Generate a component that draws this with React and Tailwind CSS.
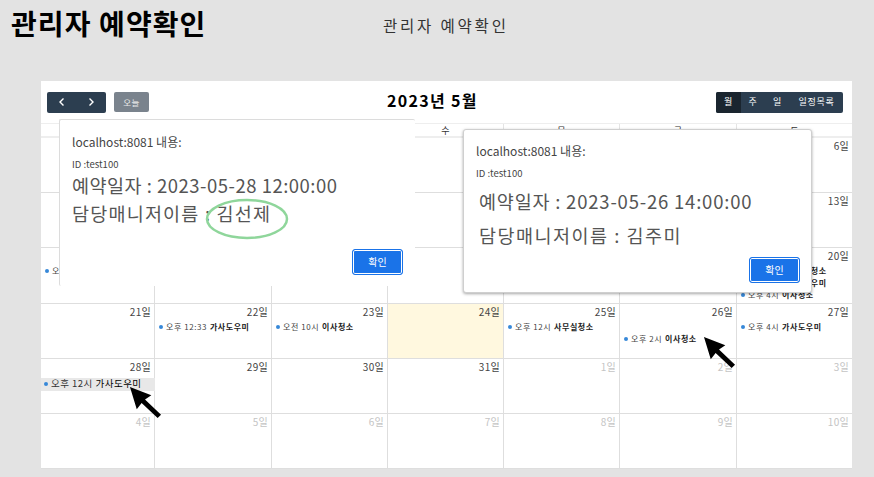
import React from 'react';

const FONT = '"Noto Sans CJK KR", "Noto Sans", sans-serif';

const WEEK_DAYS = ['일', '월', '화', '수', '목', '금', '토'];

const WEEKS = [
  [{ d: 30, off: true }, { d: 1 }, { d: 2 }, { d: 3 }, { d: 4 }, { d: 5 }, { d: 6 }],
  [{ d: 7 }, { d: 8 }, { d: 9 }, { d: 10 }, { d: 11 }, { d: 12 }, { d: 13 }],
  [
    { d: 14, events: [['오후 1시', '가사도우미']] },
    { d: 15 },
    { d: 16 },
    { d: 17 },
    { d: 18 },
    { d: 19 },
    {
      d: 20,
      events: [
        ['오후 12시', '사무실청소'],
        ['오후 12시', '가사도우미'],
        ['오후 4시', '이사청소'],
      ],
    },
  ],
  [
    { d: 21 },
    { d: 22, events: [['오후 12:33', '가사도우미']] },
    { d: 23, events: [['오전 10시', '이사청소']] },
    { d: 24, today: true },
    { d: 25, events: [['오후 12시', '사무실청소']] },
    { d: 26, events: [['오후 2시', '이사청소']], pushed: true },
    { d: 27, events: [['오후 4시', '가사도우미']] },
  ],
  [
    { d: 28, highlight: true },
    { d: 29 },
    { d: 30 },
    { d: 31 },
    { d: 1, off: true },
    { d: 2, off: true },
    { d: 3, off: true },
  ],
  [
    { d: 4, off: true },
    { d: 5, off: true },
    { d: 6, off: true },
    { d: 7, off: true },
    { d: 8, off: true },
    { d: 9, off: true },
    { d: 10, off: true },
  ],
];

function DayCell({ cell, last }) {
  return (
    <div
      className={`relative min-w-0 border-b border-[#dedede] ${last ? '' : 'border-r'} ${cell.today ? 'bg-[#fff8df]' : ''}`}
    >
      <div className={`pr-[3px] pt-[1px] text-right text-[10px] leading-[14px] tracking-[0.3px] ${cell.off ? 'text-[#c4c4c4]' : 'text-[#444]'}`}>
        {cell.d}일
      </div>
      {cell.highlight && (
        <div className="-mr-[1px] mt-[4px] flex h-[13px] items-center gap-[3px] bg-[#e8e8e8] pl-[3px] text-[9.5px] leading-none tracking-[0.45px] whitespace-nowrap">
          <span className="h-[4px] w-[4px] rounded-full bg-[#3788d8]" />
          <span className="text-[#333]">오후 12시</span>
          <span className="text-black">가사도우미</span>
        </div>
      )}
      <div className={cell.pushed ? 'pt-[14px]' : 'pt-[2px]'}>
        {cell.events?.map(([time, title], i) => (
          <div key={i} className="flex h-[12px] items-center gap-[3px] pl-[4px] text-[8px] leading-none tracking-[0.55px] whitespace-nowrap">
            <span className="h-[4px] w-[4px] shrink-0 rounded-full bg-[#3788d8]" />
            <span className="text-[#444]">{time}</span>
            <span className="font-bold text-[#222]">{title}</span>
          </div>
        ))}
      </div>
    </div>
  );
}

function Arrow({ className }) {
  return (
    <svg viewBox="0 0 34 34" className={className} aria-hidden="true">
      <path d="M1 1 L23 9.5 L16.5 14 L33 29.5 L29.5 33 L13 17.5 L8 24 Z" fill="#000" />
    </svg>
  );
}

function ConfirmButton() {
  return (
    <button className="h-[26px] w-[51px] rounded-[3px] border border-[#1a73e8] bg-[#1a73e8] text-[10px] text-white shadow-[inset_0_0_0_1px_#fff]">
      확인
    </button>
  );
}

export default function App() {
  return (
    <div className="relative h-[477px] w-[874px] overflow-hidden bg-[#e3e3e3]" style={{ fontFamily: FONT }}>
      <header className="flex h-[81px] items-start pl-[11px]">
        <h1 className="mt-[3px] w-[372px] text-[28px] leading-[40px] font-bold tracking-[1.1px] whitespace-nowrap text-black">관리자 예약확인</h1>
        <span className="mt-[13px] text-[15.5px] leading-[24px] tracking-[2.8px] whitespace-nowrap text-[#333]">관리자 예약확인</span>
      </header>

      <section className="ml-[41px] flex h-[388px] w-[811px] flex-col bg-white">
        <div className="flex h-[42px] shrink-0 items-center pr-[9px] pl-[6px]">
          <div className="flex w-[340px] items-center gap-[8px]">
            <div className="flex h-[21px] w-[59px] items-center justify-around rounded-[2px] bg-[#2c3e50] text-white">
              <svg width="10" height="10" viewBox="0 0 10 10" fill="none" stroke="#fff" strokeWidth="1.4"><path d="M6.5 1.5 3 5l3.5 3.5" /></svg>
              <svg width="10" height="10" viewBox="0 0 10 10" fill="none" stroke="#fff" strokeWidth="1.4"><path d="M3.5 1.5 7 5 3.5 8.5" /></svg>
            </div>
            <div className="flex h-[20px] w-[35px] items-center justify-center rounded-[2px] bg-[#7a838d] text-[8.5px] tracking-[0.5px] text-[#e8e8e8]">오늘</div>
          </div>
          <div className="-mt-[4px] text-[16px] font-bold tracking-[1.3px] whitespace-nowrap text-black">2023년 5월</div>
          <div className="ml-auto flex h-[21px] w-[127px] items-center overflow-hidden rounded-[2px] bg-[#2c3e50] text-[9px] tracking-[0.7px] text-white">
            <span className="flex h-full w-[25px] items-center justify-center bg-[#1a252f]">월</span>
            <span className="flex h-full w-[24px] items-center justify-center">주</span>
            <span className="flex h-full w-[25px] items-center justify-center">일</span>
            <span className="flex h-full flex-1 items-center justify-center">일정목록</span>
          </div>
        </div>

        <div className="grid h-[15px] shrink-0 grid-cols-[114px_117px_116px_116px_116px_117px_115px] border-t border-b-2 border-[#eeeeee]">
          {WEEK_DAYS.map((w, i) => (
            <div key={w} className={`text-center text-[9px] leading-[14px] text-[#333] ${i < 6 ? 'border-r border-[#e4e4e4]' : ''}`}>
              {w}
            </div>
          ))}
        </div>

        <div className="grid min-h-0 flex-1 grid-cols-[114px_117px_116px_116px_116px_117px_115px] grid-rows-6">
          {WEEKS.flat().map((cell, i) => (
            <DayCell key={i} cell={cell} last={i % 7 === 6} />
          ))}
        </div>
      </section>

      <div className="absolute top-[119px] left-[59px] h-[167px] w-[356px] rounded-[2px] border-t border-l border-[#dcdcdc] bg-white pt-[13px] pl-[12px] text-[#444]">
        <p className="text-[12px] leading-[18px]">localhost:8081 내용:</p>
        <p className="mt-[6px] text-[9.5px] leading-[14px]">ID :test100</p>
        <p className="mt-[1px] text-[18.5px] leading-[27px] tracking-[0.5px] whitespace-nowrap text-[#555]">예약일자 : 2023-05-28 12:00:00</p>
        <p className="mt-[1px] text-[18.5px] leading-[27px] tracking-[1.2px] whitespace-nowrap text-[#555]">담당매니저이름 : 김선제</p>
        <svg className="absolute top-[77px] left-[144px]" width="86" height="44" viewBox="0 0 86 44" fill="none">
          <ellipse cx="43" cy="22" rx="40" ry="19" stroke="#8fd69b" strokeWidth="2.5" />
        </svg>
        <div className="absolute top-[127px] left-[292px]"><ConfirmButton /></div>
      </div>

      <div className="absolute top-[129px] left-[463px] h-[164px] w-[349px] rounded-[3px] border border-[#cfcfcf] bg-white pt-[12px] pl-[12px] text-[#444] shadow-[0_1px_3px_rgba(0,0,0,0.35)]">
        <p className="text-[12px] leading-[18px]">localhost:8081 내용:</p>
        <p className="mt-[6px] text-[9.5px] leading-[14px]">ID :test100</p>
        <p className="mt-[8px] pl-[3px] text-[18.5px] leading-[27px] tracking-[0.8px] whitespace-nowrap text-[#555]">예약일자 : 2023-05-26 14:00:00</p>
        <p className="mt-[7px] pl-[3px] text-[18.5px] leading-[27px] tracking-[1.5px] whitespace-nowrap text-[#555]">담당매니저이름 : 김주미</p>
        <div className="absolute top-[125px] left-[285px]"><ConfirmButton /></div>
      </div>

      <Arrow className="absolute top-[386px] left-[129px] h-[33px] w-[33px]" />
      <Arrow className="absolute top-[336px] left-[703px] h-[33px] w-[33px]" />
    </div>
  );
}
